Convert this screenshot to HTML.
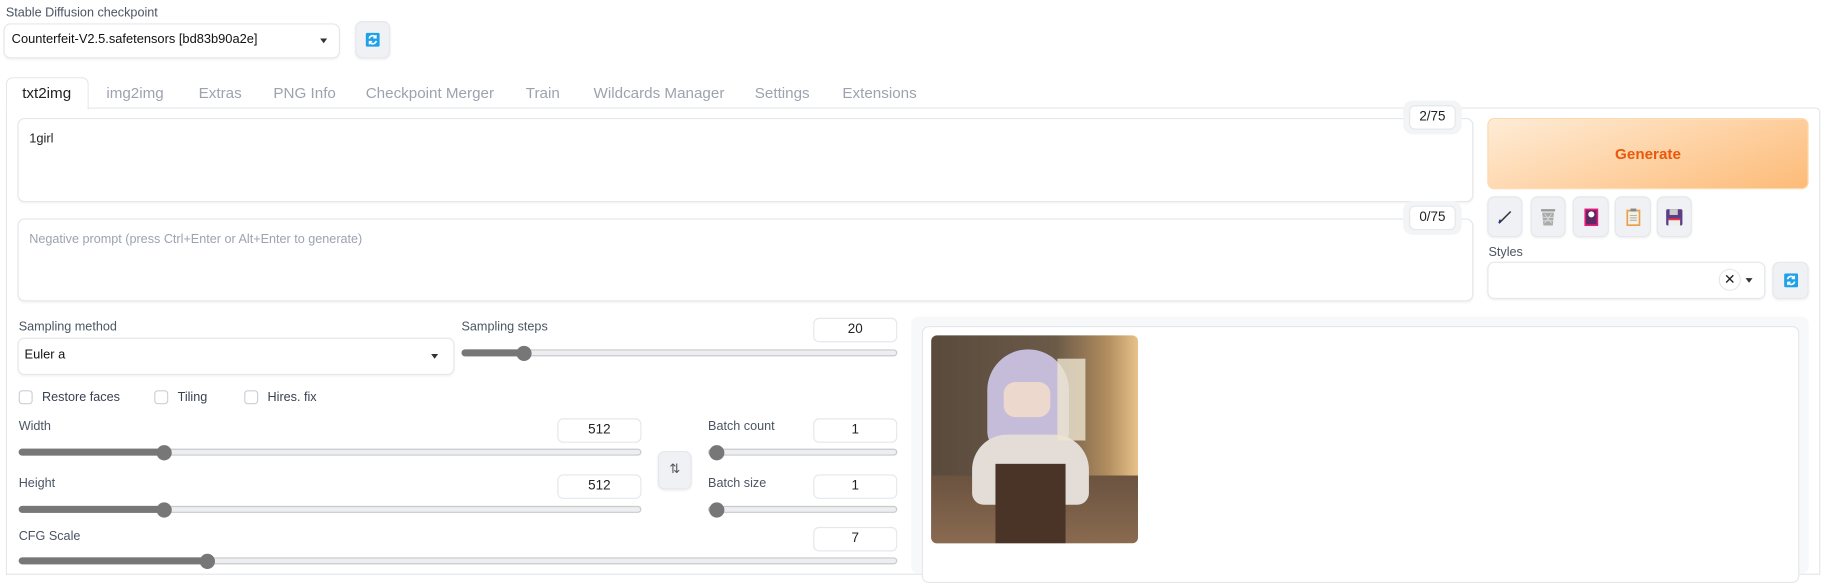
<!DOCTYPE html>
<html><head><meta charset="utf-8"><style>
*{box-sizing:border-box;margin:0;padding:0}
html,body{width:1832px;height:562px;overflow:hidden;background:#fff}
#w{position:absolute;left:0;top:0;width:1568px;height:481px;transform:scale(1.16837);transform-origin:0 0;font-family:"Liberation Sans",sans-serif;color:#374151}
.a{position:absolute}
.t{font-size:10.8px;color:#4b5563;white-space:nowrap}
.box{border:1px solid #e5e7eb;border-radius:6px;background:#fff;box-shadow:0 1px 2px rgba(0,0,0,.05)}
.btn{background:#f0f1f4;border:1px solid #e5e7eb;border-radius:6px;box-shadow:0 1px 2px rgba(0,0,0,.06)}
.num{border:1px solid #e5e7eb;border-radius:5px;background:#fff;font-size:11.5px;text-align:center;line-height:19px;color:#222}
.tr{height:6px;border:1px solid #c9c9c9;border-radius:3px;background:#eceef1}
.fill{position:absolute;left:-1px;top:-1px;height:6px;background:#777;border-radius:3px}
.th{position:absolute;top:-4px;width:13px;height:13px;border-radius:50%;background:#777}
.tab{position:absolute;top:72px;font-size:13px;color:#9ca3af}
.cb{width:12px;height:12px;border:1px solid #cbd0d6;border-radius:3px}
.ic{position:absolute;left:50%;top:50%;transform:translate(-50%,-50%)}
</style></head><body><div id="w">
<div class="a t" style="left:5px;top:5px">Stable Diffusion checkpoint</div>
<div class="a box" style="left:3px;top:20px;width:288px;height:30px"></div>
<div class="a" style="left:10px;top:28px;font-size:11px;color:#111">Counterfeit-V2.5.safetensors [bd83b90a2e]</div>
<div class="a" style="left:274px;top:33px;border-left:3px solid transparent;border-right:3px solid transparent;border-top:4px solid #333"></div>
<div class="a btn" style="left:304px;top:18px;width:30px;height:32px"><svg class="ic" width="12" height="12" viewBox="0 0 12 12"><rect width="12" height="12" rx="1.5" fill="#1da1e8"/><path d="M3 5a3 3 0 0 1 5.5-1M9 7a3 3 0 0 1-5.5 1" stroke="#fff" stroke-width="1.4" fill="none"/><path d="M8.8 2v2.4H6.5M3.2 10V7.6h2.3" stroke="#fff" stroke-width="1.2" fill="none"/></svg></div>

<div class="a" style="left:5px;top:92px;width:1553px;height:400px;border:1px solid #e5e7eb;border-radius:0 4px 0 0"></div>
<div class="a" style="left:5px;top:66px;width:71px;height:28px;border:1px solid #e5e7eb;border-bottom:none;border-radius:6px 6px 0 0;background:#fff"></div>
<div class="tab" style="left:19px;color:#222">txt2img</div>
<div class="tab" style="left:91px">img2img</div>
<div class="tab" style="left:170px">Extras</div>
<div class="tab" style="left:234px">PNG Info</div>
<div class="tab" style="left:313px">Checkpoint Merger</div>
<div class="tab" style="left:450px">Train</div>
<div class="tab" style="left:508px">Wildcards Manager</div>
<div class="tab" style="left:646px">Settings</div>
<div class="tab" style="left:721px">Extensions</div>

<div class="a box" style="left:15px;top:101px;width:1246px;height:72px"></div>
<div class="a" style="left:25px;top:113px;font-size:11px;color:#222">1girl</div>
<div class="a" style="left:1201px;top:86px;width:50px;height:29px;background:#f3f4f6;border-radius:8px"></div>
<div class="a num" style="left:1206px;top:90px;width:40px;height:21px">2/75</div>
<div class="a box" style="left:15px;top:187px;width:1246px;height:71px"></div>
<div class="a" style="left:25px;top:199px;font-size:10.8px;color:#9ca3af">Negative prompt (press Ctrl+Enter or Alt+Enter to generate)</div>
<div class="a" style="left:1201px;top:172px;width:50px;height:29px;background:#f3f4f6;border-radius:8px"></div>
<div class="a num" style="left:1206px;top:176px;width:40px;height:21px">0/75</div>

<div class="a" style="left:1273px;top:101px;width:275px;height:61px;border-radius:6px;border:1px solid #fed7aa;background:linear-gradient(160deg,#feecd6,#fdbb78);text-align:center;line-height:59px;font-size:13px;font-weight:bold;color:#ea580c">Generate</div>
<div class="a btn" style="left:1273px;top:168px;width:30px;height:35px"><svg class="ic" width="14" height="14"><path d="M2 12L12 2" stroke="#333" stroke-width="1.3"/><path d="M2 12l1-3" stroke="#1e3a8a" stroke-width="1.3"/></svg></div>
<div class="a btn" style="left:1310px;top:168px;width:30px;height:35px"><svg class="ic" width="14" height="16"><rect x="1" y="1" width="12" height="2" fill="#999"/><path d="M2 4h10l-1 11H3z" fill="#aaa"/><path d="M4 5l6 8M10 5l-6 8M2 8h10M2 11h10" stroke="#ddd" stroke-width=".7"/></svg></div>
<div class="a btn" style="left:1346px;top:168px;width:31px;height:35px"><svg class="ic" width="12" height="15"><rect width="12" height="15" fill="#e6197a"/><rect x="1.5" y="1.5" width="9" height="12" fill="#5b2a63"/><circle cx="6" cy="5" r="2.6" fill="#fff"/></svg></div>
<div class="a btn" style="left:1382px;top:168px;width:31px;height:35px"><svg class="ic" width="12" height="15"><rect y="1" width="12" height="14" fill="#e8a14a"/><rect x="1.5" y="2.5" width="9" height="11" fill="#f5f0e6"/><rect x="3.5" width="5" height="2.5" fill="#888"/><path d="M3 6h6M3 8h6M3 10h6" stroke="#aaa" stroke-width=".8"/></svg></div>
<div class="a btn" style="left:1418px;top:168px;width:30px;height:35px"><svg class="ic" width="14" height="14"><rect width="14" height="14" rx="1.5" fill="#5a3e8a"/><rect x="3" y="0" width="7" height="5" fill="#ccc"/><rect x="2" y="8" width="10" height="6" fill="#eee"/><rect x="2" y="8" width="10" height="1.5" fill="#e33"/></svg></div>
<div class="a t" style="left:1274px;top:210px">Styles</div>
<div class="a box" style="left:1273px;top:224px;width:238px;height:32px"></div>
<div class="a" style="left:1471px;top:230px;width:19px;height:19px;border:1px solid #e5e7eb;border-radius:50%;text-align:center;line-height:17px;font-size:12px;color:#222">✕</div>
<div class="a" style="left:1494px;top:238px;border-left:3px solid transparent;border-right:3px solid transparent;border-top:4px solid #333"></div>
<div class="a btn" style="left:1517px;top:224px;width:31px;height:32px"><svg class="ic" width="12" height="12" viewBox="0 0 12 12"><rect width="12" height="12" rx="1.5" fill="#1da1e8"/><path d="M3 5a3 3 0 0 1 5.5-1M9 7a3 3 0 0 1-5.5 1" stroke="#fff" stroke-width="1.4" fill="none"/><path d="M8.8 2v2.4H6.5M3.2 10V7.6h2.3" stroke="#fff" stroke-width="1.2" fill="none"/></svg></div>

<div class="a t" style="left:16px;top:274px">Sampling method</div>
<div class="a box" style="left:15px;top:289px;width:374px;height:32px"></div>
<div class="a" style="left:21px;top:298px;font-size:11px;color:#111">Euler a</div>
<div class="a" style="left:369px;top:303px;border-left:3px solid transparent;border-right:3px solid transparent;border-top:4px solid #333"></div>
<div class="a t" style="left:395px;top:274px">Sampling steps</div>
<div class="a num" style="left:696px;top:272px;width:72px;height:21px">20</div>
<div class="a tr" style="left:395px;top:299px;width:373px"><div class="fill" style="width:53px"></div><div class="th" style="left:46px"></div></div>

<div class="a cb" style="left:16px;top:334px"></div><div class="a t" style="left:36px;top:334px;color:#374151">Restore faces</div>
<div class="a cb" style="left:132px;top:334px"></div><div class="a t" style="left:152px;top:334px;color:#374151">Tiling</div>
<div class="a cb" style="left:209px;top:334px"></div><div class="a t" style="left:229px;top:334px;color:#374151">Hires. fix</div>

<div class="a t" style="left:16px;top:359px">Width</div>
<div class="a num" style="left:477px;top:358px;width:72px;height:21px">512</div>
<div class="a tr" style="left:16px;top:384px;width:533px"><div class="fill" style="width:124px"></div><div class="th" style="left:117px"></div></div>
<div class="a t" style="left:16px;top:408px">Height</div>
<div class="a num" style="left:477px;top:406px;width:72px;height:21px">512</div>
<div class="a tr" style="left:16px;top:433px;width:533px"><div class="fill" style="width:124px"></div><div class="th" style="left:117px"></div></div>
<div class="a btn" style="left:563px;top:386px;width:29px;height:33px;text-align:center;line-height:31px;font-size:11px;color:#555">⇅</div>
<div class="a t" style="left:606px;top:359px">Batch count</div>
<div class="a num" style="left:696px;top:358px;width:72px;height:21px">1</div>
<div class="a tr" style="left:606px;top:384px;width:162px"><div class="th" style="left:0px"></div></div>
<div class="a t" style="left:606px;top:408px">Batch size</div>
<div class="a num" style="left:696px;top:406px;width:72px;height:21px">1</div>
<div class="a tr" style="left:606px;top:433px;width:162px"><div class="th" style="left:0px"></div></div>
<div class="a t" style="left:16px;top:453px">CFG Scale</div>
<div class="a num" style="left:696px;top:451px;width:72px;height:21px">7</div>
<div class="a tr" style="left:16px;top:477px;width:752px"><div class="fill" style="width:162px"></div><div class="th" style="left:154px"></div></div>

<div class="a" style="left:780px;top:271px;width:768px;height:220px;background:#f7f8fa;border-radius:6px"></div>
<div class="a" style="left:789px;top:279px;width:751px;height:220px;background:#fff;border:1px solid #e5e7eb;border-radius:6px"></div>
<div class="a" style="left:797px;top:287px;width:177px;height:178px;border-radius:5px;overflow:hidden;background:linear-gradient(90deg,#5a4a3c,#6b5a48 60%,#b08c5e 85%,#e8c28a)">
<div class="a" style="left:0;top:120px;width:177px;height:58px;background:linear-gradient(180deg,#6a5340,#8a6a50)"></div>
<div class="a" style="left:48px;top:12px;width:70px;height:90px;border-radius:35px 35px 20px 20px;background:#c4bcd8"></div>
<div class="a" style="left:62px;top:40px;width:40px;height:30px;border-radius:10px;background:#ecd8cc"></div>
<div class="a" style="left:35px;top:85px;width:100px;height:60px;border-radius:30px 30px 10px 10px;background:#e4dcd6"></div>
<div class="a" style="left:55px;top:110px;width:60px;height:68px;background:#4a3428"></div>
<div class="a" style="left:108px;top:20px;width:24px;height:70px;background:#eee5d0;opacity:.8"></div>
</div>
</div></body></html>
